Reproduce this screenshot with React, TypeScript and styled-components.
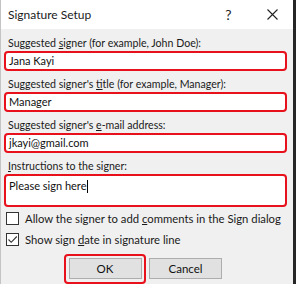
import React, { useState } from "react"
import styled, { createGlobalStyle } from "styled-components"

const GlobalStyle = createGlobalStyle`
  html, body {
    margin: 0;
    padding: 0;
    background: #fff;
  }
  body {
    font-family: Lato, "Noto Sans", Arial, sans-serif;
    color: #1a1a1a;
  }
`

interface Field {
  key: string
  label: React.ReactNode
  value: string
  multiline?: boolean
}

const App: React.FC = () => {
  const [allowComments, setAllowComments] = useState(false)
  const [showDate, setShowDate] = useState(true)

  const fields: Array<Field> = [
    {
      key: "signer",
      label: <>Suggested <u>s</u>igner (for example, John Doe):</>,
      value: "Jana Kayi"
    },
    {
      key: "title",
      label: <>Suggested signer's <u>t</u>itle (for example, Manager):</>,
      value: "Manager"
    },
    {
      key: "email",
      label: <>Suggested signer's <u>e</u>-mail address:</>,
      value: "jkayi@gmail.com"
    },
    {
      key: "instructions",
      label: <><u>I</u>nstructions to the signer:</>,
      value: "Please sign here",
      multiline: true
    }
  ]

  return (
    <>
      <GlobalStyle />
      <Dialog>
        <TitleBar>
          <Title>Signature Setup</Title>
          <TitleButton $width={45}>?</TitleButton>
          <TitleButton $width={42}>
            <svg width="11" height="11" viewBox="0 0 11 11">
              <path d="M0.5 0.5 L10.5 10.5 M10.5 0.5 L0.5 10.5" stroke="#222" strokeWidth="1.1" />
            </svg>
          </TitleButton>
        </TitleBar>

        <Body>
          {fields.map((f) => (
            <FieldBlock key={f.key} $last={f.multiline}>
              <Label>{f.label}</Label>
              <Highlight $tall={f.multiline}>
                <InputText>
                  {f.value}
                  {f.multiline && <Caret />}
                </InputText>
              </Highlight>
            </FieldBlock>
          ))}

          <CheckRow onClick={() => setAllowComments(!allowComments)}>
            <CheckBox>{allowComments && <CheckMark />}</CheckBox>
            <span>Allow the signer to add <u>c</u>omments in the Sign dialog</span>
          </CheckRow>
          <CheckRow onClick={() => setShowDate(!showDate)}>
            <CheckBox>{showDate && <CheckMark />}</CheckBox>
            <span>Show sign <u>d</u>ate in signature line</span>
          </CheckRow>

          <ButtonRow>
            <ButtonFrame>
              <Button>OK</Button>
            </ButtonFrame>
            <Button>Cancel</Button>
          </ButtonRow>
        </Body>
      </Dialog>
    </>
  )
}

const CheckMark: React.FC = () => (
  <svg width="11" height="11" viewBox="0 0 11 11">
    <path d="M1.5 5.5 L4.2 8.3 L9.8 2.5" fill="none" stroke="#333" strokeWidth="1.1" />
  </svg>
)

const Dialog = styled.div`
  width: 293px;
  height: 284px;
  box-sizing: border-box;
  background: #f0f0f0;
  border-left: 1px solid #c4c4c4;
  display: flex;
  flex-direction: column;
  box-shadow: 3px 0 0 #262626, 0 2px 0 #262626, 3px 2px 0 #262626;
`

const TitleBar = styled.div`
  height: 29px;
  flex: none;
  background: #fff;
  display: flex;
  align-items: center;
  padding-left: 7px;
`

const Title = styled.div`
  flex: 1;
  font-size: 12px;
  color: #1a1a1a;
`

const TitleButton = styled.div<{ $width: number }>`
  width: ${(p) => p.$width}px;
  height: 29px;
  display: flex;
  align-items: center;
  justify-content: center;
  font-size: 14px;
  color: #222;
`

const Body = styled.div`
  padding: 7px 6px 0 3px;
  display: flex;
  flex-direction: column;
  font-size: 10.6px;
`

const FieldBlock = styled.div<{ $last?: boolean }>`
  display: flex;
  flex-direction: column;
  margin-bottom: ${(p) => (p.$last ? 1 : 6)}px;
`

const Label = styled.div`
  height: 14px;
  line-height: 14px;
  padding-left: 4px;
  margin-bottom: 1px;
  white-space: nowrap;
`

const Highlight = styled.div<{ $tall?: boolean }>`
  height: ${(p) => (p.$tall ? 33 : 20)}px;
  box-sizing: border-box;
  border: 2.5px solid #e8101a;
  border-radius: 4px;
  background: #fff;
  display: flex;
  align-items: ${(p) => (p.$tall ? "flex-start" : "center")};
  padding: ${(p) => (p.$tall ? "3px 0 0 3px" : "0 3px")};
  font-size: 11px;
`

const InputText = styled.div`
  display: flex;
  align-items: center;
  line-height: 14px;
  color: #111;
`

const Caret = styled.span`
  display: inline-block;
  width: 1px;
  height: 13px;
  background: #000;
  margin-left: 1px;
`

const CheckRow = styled.div`
  display: flex;
  align-items: center;
  gap: 6px;
  height: 21px;
  padding-left: 2px;
  white-space: nowrap;
  font-size: 11.3px;
  cursor: default;
`

const CheckBox = styled.div`
  flex: none;
  width: 13px;
  height: 13px;
  box-sizing: border-box;
  border: 1px solid #333;
  background: #fff;
  display: flex;
  align-items: center;
  justify-content: center;
`

const ButtonRow = styled.div`
  display: flex;
  justify-content: center;
  align-items: center;
  gap: 8px;
  margin-top: 8px;
`

const ButtonFrame = styled.div`
  margin: -5px;
  padding: 2.5px;
  border: 2.5px solid #e8101a;
  border-radius: 4px;
`

const Button = styled.div`
  width: 73px;
  height: 21px;
  box-sizing: border-box;
  background: #e1e1e1;
  border: 1px solid #adadad;
  display: flex;
  align-items: center;
  justify-content: center;
  font-size: 11.5px;
  color: #111;
`

export default App
